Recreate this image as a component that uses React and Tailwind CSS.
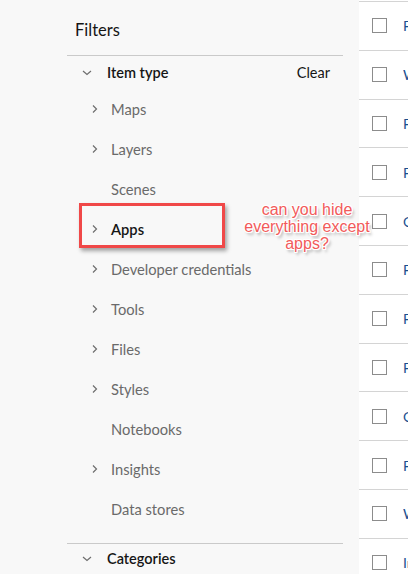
import { Fragment } from 'react'

const types = [
  { label: 'Maps', expand: true },
  { label: 'Layers', expand: true },
  { label: 'Scenes', expand: false },
  { label: 'Apps', expand: true, active: true },
  { label: 'Developer credentials', expand: true },
  { label: 'Tools', expand: true },
  { label: 'Files', expand: true },
  { label: 'Styles', expand: true },
  { label: 'Notebooks', expand: false },
  { label: 'Insights', expand: true },
  { label: 'Data stores', expand: false },
]

const results = [
  'Forest fire risk', 'Water utilities', 'Flood zones', 'Field survey', 'City parcels', 'Fire stations',
  'Feature service', 'Fleet tracking', 'Census tracts', 'Farmland', 'Wetlands', 'Imagery',
]

function ChevronRight() {
  return (
    <svg width="8" height="10" viewBox="0 0 8 10" className="shrink-0">
      <polyline points="2,1.5 5.5,5 2,8.5" fill="none" stroke="#6e6e6e" strokeWidth="1.2" />
    </svg>
  )
}

function ChevronDown() {
  return (
    <svg width="12" height="8" viewBox="0 0 12 8" className="shrink-0">
      <polyline points="2,2 6,5.5 10,2" fill="none" stroke="#6e6e6e" strokeWidth="1.2" />
    </svg>
  )
}

export default function App() {
  return (
    <div className="flex h-[574px] w-[408px] overflow-hidden bg-[#f8f8f8] font-['Lato','Liberation_Sans',sans-serif]">
      <div className="relative w-[359px] shrink-0 pl-[67px] pr-[16px]">
        <div className="flex h-[56px] items-center border-b border-[#cacaca] pl-[8px] pt-[6px] text-[16.5px] text-[#151515]">
          Filters
        </div>

        <div className="flex h-[33px] items-center pl-[14px] pr-[13px]">
          <ChevronDown />
          <span className="ml-[14px] flex-1 text-[14.5px] font-semibold text-[#151515]">Item type</span>
          <span className="text-[14.5px] text-[#151515]">Clear</span>
        </div>

        {types.map((t) => (
          <Fragment key={t.label}>
            <div className="flex h-[40px] items-center pl-[24px]">
              <span className="w-[20px]">{t.expand && <ChevronRight />}</span>
              <span className={t.active ? 'text-[14.7px] font-semibold text-[#151515]' : 'text-[14.7px] text-[#6a6a6a]'}>
                {t.label}
              </span>
            </div>
          </Fragment>
        ))}

        <div className="mt-[14px] flex h-[31px] items-center border-t border-[#cacaca] pl-[14px]">
          <ChevronDown />
          <span className="ml-[14px] text-[14.5px] font-semibold text-[#151515]">Categories</span>
        </div>

        <div className="absolute left-[79px] top-[203px] h-[45px] w-[146px] border-[3px] border-[#f04848] shadow-[2px_3px_4px_rgba(0,0,0,0.35)]" />

        <div
          className="absolute left-[240px] top-[201px] w-[134px] text-center font-['Liberation_Sans',sans-serif] text-[16px] leading-[17px] text-[#f25a5a]"
          style={{ textShadow: '1px 0 0 #fff, -1px 0 0 #fff, 0 1px 0 #fff, 0 -1px 0 #fff, 1px 1px 0 #fff, -1px -1px 0 #fff, 1px -1px 0 #fff, -1px 1px 0 #fff, 2px 3px 3px rgba(0,0,0,0.35)' }}
        >
          can you hide
          <br />
          everything except
          <br />
          apps?
        </div>
      </div>

      <div className="min-w-0 flex-1 overflow-hidden bg-white pt-px">
        <div className="border-t border-[#d4d4d4]">
          {results.map((r) => (
            <div key={r} className="flex h-[48.8px] items-center border-b border-[#d4d4d4] pl-[13px]">
              <span className="h-[15px] w-[15px] shrink-0 border border-[#8c8c8c] bg-white" />
              <span className="ml-[16px] min-w-0 overflow-hidden whitespace-nowrap text-[14px] text-[#1a4f8f]">{r}</span>
            </div>
          ))}
        </div>
      </div>
    </div>
  )
}
